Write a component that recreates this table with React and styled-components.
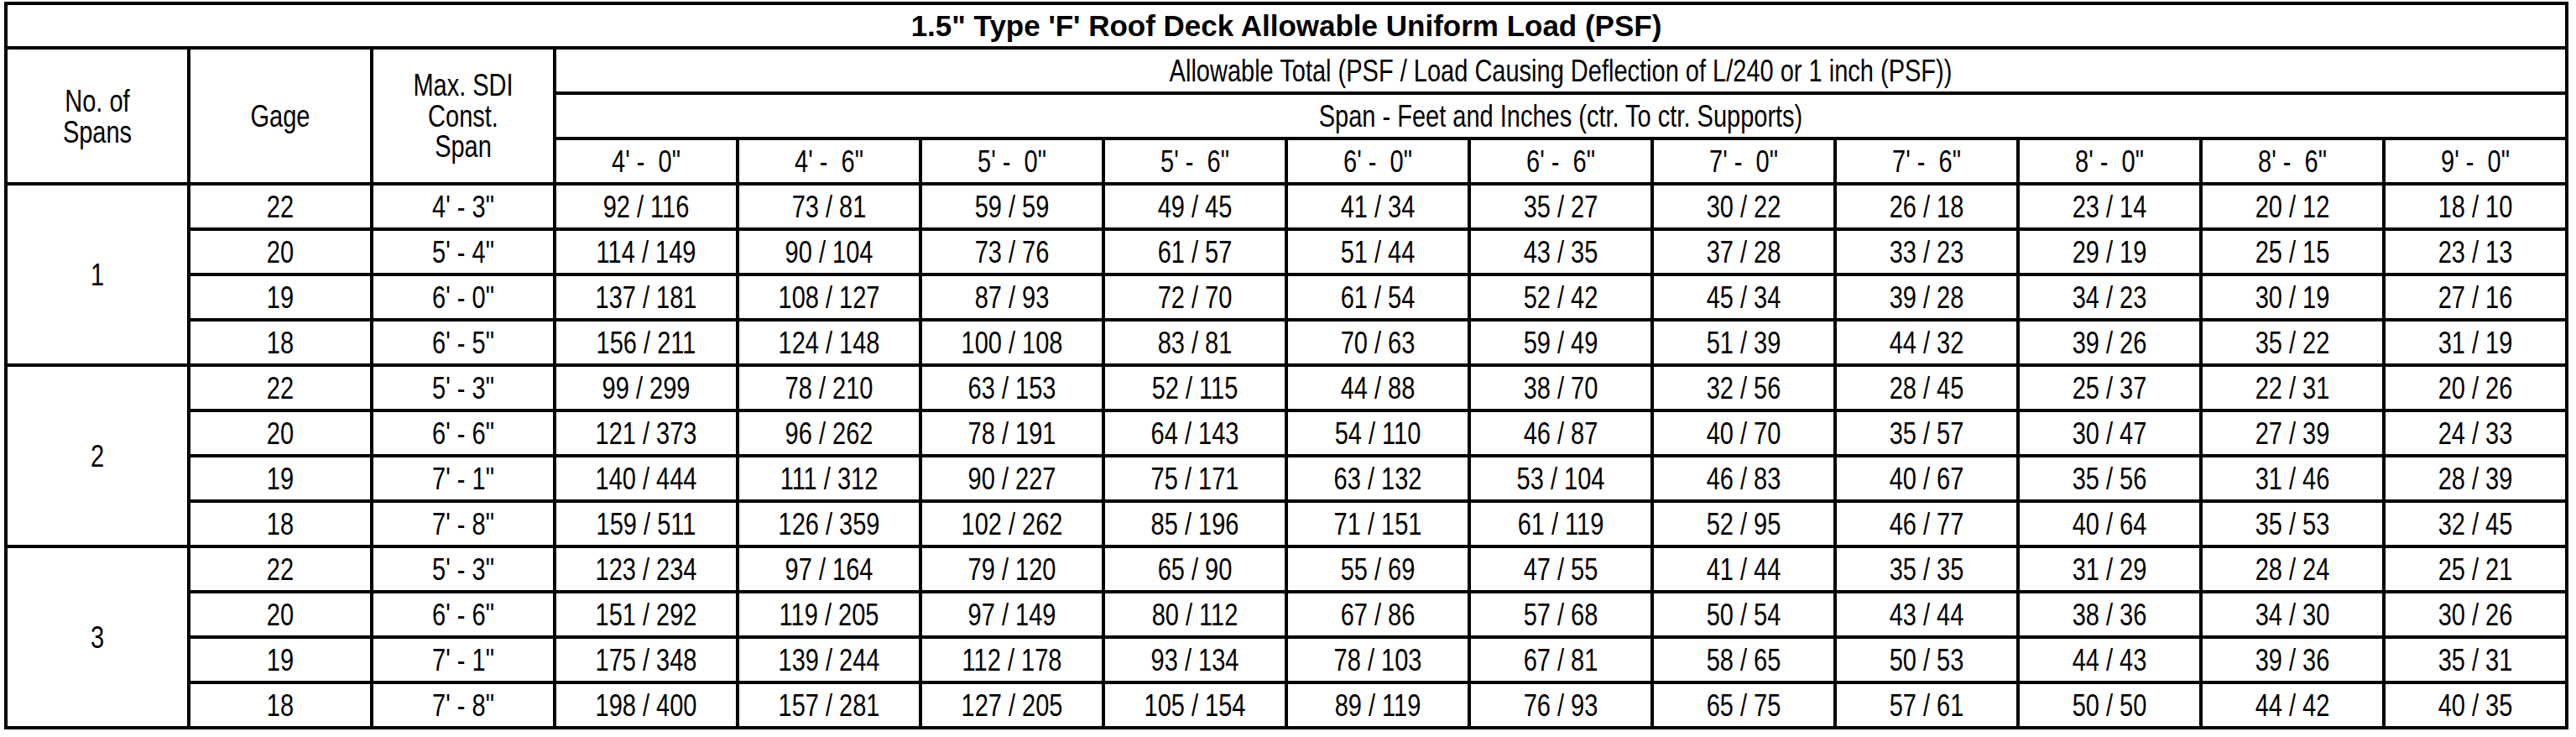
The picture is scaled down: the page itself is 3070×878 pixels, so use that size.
import styled, { createGlobalStyle } from 'styled-components'

const GlobalStyle = createGlobalStyle`
    html, body {
        margin: 0;
        padding: 0;
        background: #fff;
    }
    body {
        font-family: "Liberation Sans", Arial, sans-serif;
        color: #000;
    }
`

const Page = styled.div`
    padding: 2px 0 0 5px;
`

const Grid = styled.div`
    display: grid;
    width: max-content;
    grid-template-columns: repeat(14, 214px);
    grid-template-rows: 49px repeat(15, 50px);
    gap: 4px;
    padding: 4px;
    background: #000;
`

const Cell = styled.div`
    display: flex;
    align-items: center;
    justify-content: center;
    text-align: center;
    background: #fff;
    grid-column: ${p => (p.$cols ? `span ${p.$cols}` : 'auto')};
    grid-row: ${p => (p.$rows ? `span ${p.$rows}` : 'auto')};
`

// the source print has tall, narrow lettering: plain Arial metrics stretched vertically
const Text = styled.span`
    display: inline-block;
    font-size: 29px;
    line-height: 28.5px;
    white-space: pre;
    transform: scaleY(1.28);
`

const Title = styled.span`
    font-size: 35px;
    font-weight: 700;
    white-space: pre;
`

const spanHeads = [
    `4' -  0"`, `4' -  6"`, `5' -  0"`, `5' -  6"`, `6' -  0"`, `6' -  6"`,
    `7' -  0"`, `7' -  6"`, `8' -  0"`, `8' -  6"`, `9' -  0"`,
]

const groups = [
    {
        spans: '1',
        rows: [
            ['22', `4' - 3"`, '92 / 116', '73 / 81', '59 / 59', '49 / 45', '41 / 34', '35 / 27', '30 / 22', '26 / 18', '23 / 14', '20 / 12', '18 / 10'],
            ['20', `5' - 4"`, '114 / 149', '90 / 104', '73 / 76', '61 / 57', '51 / 44', '43 / 35', '37 / 28', '33 / 23', '29 / 19', '25 / 15', '23 / 13'],
            ['19', `6' - 0"`, '137 / 181', '108 / 127', '87 / 93', '72 / 70', '61 / 54', '52 / 42', '45 / 34', '39 / 28', '34 / 23', '30 / 19', '27 / 16'],
            ['18', `6' - 5"`, '156 / 211', '124 / 148', '100 / 108', '83 / 81', '70 / 63', '59 / 49', '51 / 39', '44 / 32', '39 / 26', '35 / 22', '31 / 19'],
        ],
    },
    {
        spans: '2',
        rows: [
            ['22', `5' - 3"`, '99 / 299', '78 / 210', '63 / 153', '52 / 115', '44 / 88', '38 / 70', '32 / 56', '28 / 45', '25 / 37', '22 / 31', '20 / 26'],
            ['20', `6' - 6"`, '121 / 373', '96 / 262', '78 / 191', '64 / 143', '54 / 110', '46 / 87', '40 / 70', '35 / 57', '30 / 47', '27 / 39', '24 / 33'],
            ['19', `7' - 1"`, '140 / 444', '111 / 312', '90 / 227', '75 / 171', '63 / 132', '53 / 104', '46 / 83', '40 / 67', '35 / 56', '31 / 46', '28 / 39'],
            ['18', `7' - 8"`, '159 / 511', '126 / 359', '102 / 262', '85 / 196', '71 / 151', '61 / 119', '52 / 95', '46 / 77', '40 / 64', '35 / 53', '32 / 45'],
        ],
    },
    {
        spans: '3',
        rows: [
            ['22', `5' - 3"`, '123 / 234', '97 / 164', '79 / 120', '65 / 90', '55 / 69', '47 / 55', '41 / 44', '35 / 35', '31 / 29', '28 / 24', '25 / 21'],
            ['20', `6' - 6"`, '151 / 292', '119 / 205', '97 / 149', '80 / 112', '67 / 86', '57 / 68', '50 / 54', '43 / 44', '38 / 36', '34 / 30', '30 / 26'],
            ['19', `7' - 1"`, '175 / 348', '139 / 244', '112 / 178', '93 / 134', '78 / 103', '67 / 81', '58 / 65', '50 / 53', '44 / 43', '39 / 36', '35 / 31'],
            ['18', `7' - 8"`, '198 / 400', '157 / 281', '127 / 205', '105 / 154', '89 / 119', '76 / 93', '65 / 75', '57 / 61', '50 / 50', '44 / 42', '40 / 35'],
        ],
    },
]

export default function App() {
    return (
        <Page>
            <GlobalStyle />
            <Grid>
                <Cell $cols={14}>
                    <Title>1.5" Type 'F' Roof Deck Allowable Uniform Load (PSF)</Title>
                </Cell>

                <Cell $rows={3}><Text>{'No. of\nSpans'}</Text></Cell>
                <Cell $rows={3}><Text>Gage</Text></Cell>
                <Cell $rows={3}><Text>{'Max. SDI\nConst.\nSpan'}</Text></Cell>
                <Cell $cols={11}>
                    <Text>Allowable Total (PSF / Load Causing Deflection of L/240 or 1 inch (PSF))</Text>
                </Cell>
                <Cell $cols={11}>
                    <Text>Span - Feet and Inches (ctr. To ctr. Supports)</Text>
                </Cell>
                {spanHeads.map(h => <Cell key={h}><Text>{h}</Text></Cell>)}

                {groups.map(g => [
                    <Cell key={'g' + g.spans} $rows={4}><Text>{g.spans}</Text></Cell>,
                    ...g.rows.flatMap((row, r) =>
                        row.map((v, c) => (
                            <Cell key={`${g.spans}-${r}-${c}`}><Text>{v}</Text></Cell>
                        ))
                    ),
                ])}
            </Grid>
        </Page>
    )
}
